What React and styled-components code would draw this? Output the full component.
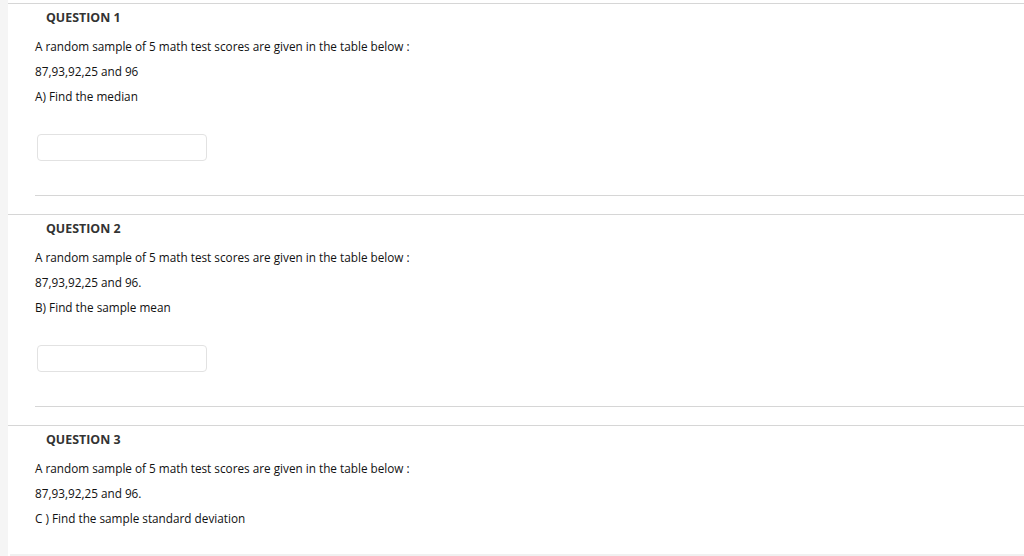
import React from "react";
import styled, { createGlobalStyle } from "styled-components";

const GlobalStyle = createGlobalStyle`
  html, body {
    margin: 0;
    padding: 0;
    background: #ffffff;
  }
  body {
    font-family: "Open Sans", "Noto Sans", sans-serif;
    color: #111;
  }
`;

const Page = styled.div`
  display: flex;
  width: 1024px;
  height: 556px;
  overflow: hidden;
`;

const Rail = styled.div`
  width: 8px;
  flex: none;
  background: #f5f5f5;
`;

const Main = styled.div`
  flex: 1;
  padding-top: 3px;
  display: flex;
  flex-direction: column;
`;

const Question = styled.section`
  box-sizing: border-box;
  border-top: 1px solid #d6d6d6;
  flex: ${(p) => (p.$last ? "1 1 auto" : "none")};
  height: ${(p) => (p.$last ? "auto" : "211px")};
  display: flex;
  flex-direction: column;
`;

const Title = styled.h3`
  margin: 6px 0 0 38px;
  font-size: 12.4px;
  line-height: 16px;
  font-weight: 700;
  color: #333;
`;

const Body = styled.div`
  margin: 8px 0 0 27px;
`;

const Line = styled.p`
  margin: 0;
  font-size: 11.75px;
  line-height: 25px;
  color: #111;
`;

const Answer = styled.input`
  display: block;
  box-sizing: border-box;
  width: 170px;
  height: 27px;
  margin: 25px 0 0 29px;
  border: 1px solid #e2e2e2;
  border-radius: 4px;
  background: #fff;
  outline: none;
`;

const Divider = styled.hr`
  margin: 34px 0 0 27px;
  border: 0;
  border-top: 1px solid #d6d6d6;
  height: 0;
`;

const Footer = styled.div`
  flex: none;
  margin-left: 2px;
  height: 2px;
  background: #f0f0f0;
`;

const questions = [
  {
    n: 1,
    data: "87,93,92,25 and 96",
    ask: "A) Find the median",
  },
  {
    n: 2,
    data: "87,93,92,25 and 96.",
    ask: "B) Find the sample mean",
  },
  {
    n: 3,
    data: "87,93,92,25 and 96.",
    ask: "C ) Find the sample standard deviation",
  },
];

export default function App() {
  return (
    <>
      <GlobalStyle />
      <Page>
        <Rail />
        <Main>
          {questions.map((q) => (
            <Question key={q.n} $last={q.n === 3}>
              <Title>QUESTION {q.n}</Title>
              <Body>
                <Line>A random sample of 5 math test scores are given in the table below :</Line>
                <Line>{q.data}</Line>
                <Line>{q.ask}</Line>
              </Body>
              {q.n < 3 && (
                <>
                  <Answer type="text" />
                  <Divider />
                </>
              )}
            </Question>
          ))}
          <Footer />
        </Main>
      </Page>
    </>
  );
}
